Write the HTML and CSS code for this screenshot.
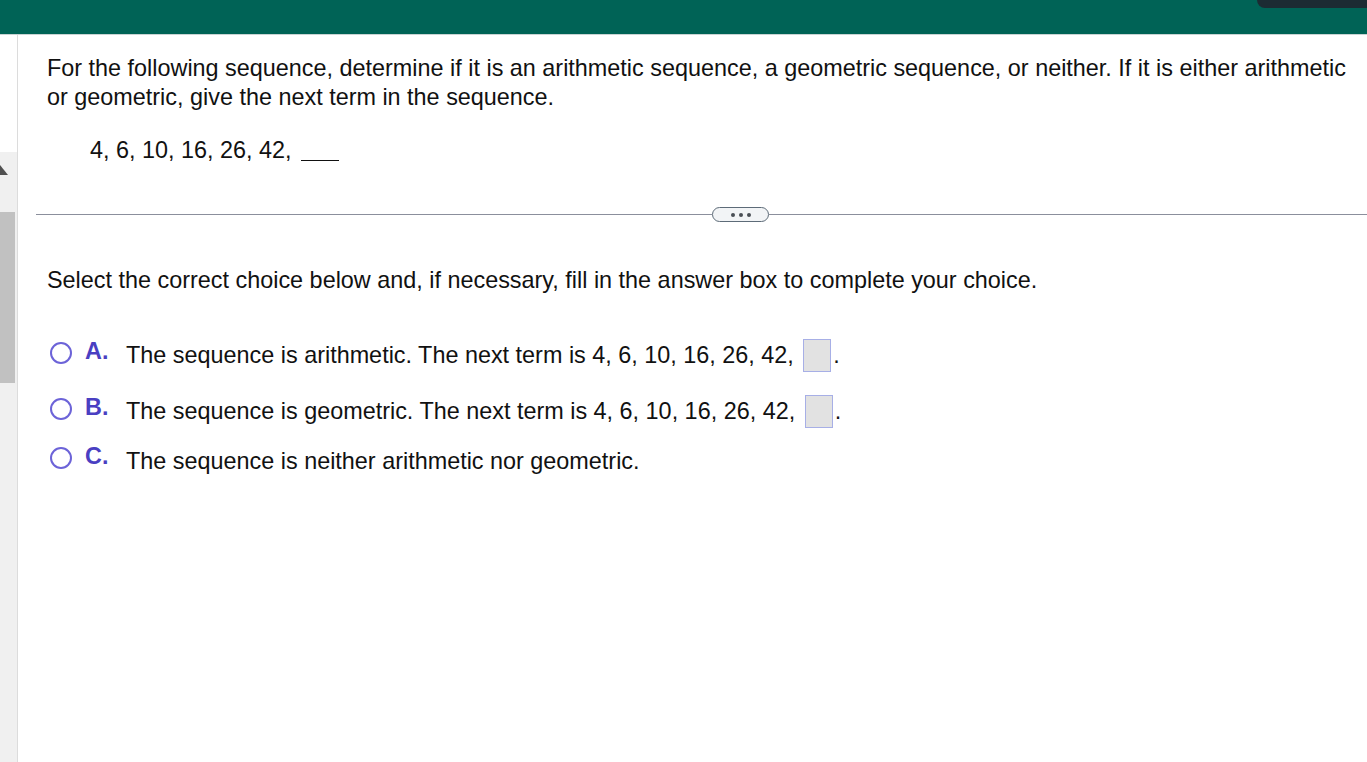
FILE: index.html
```html
<!DOCTYPE html>
<html lang="en">
<head>
  <meta charset="UTF-8" />
  <title>Sequence question</title>
  <link rel="stylesheet" href="styles.css">
</head>
<body>
  <div class="topbar">
    <div class="corner"></div>
  </div>

  <div class="page">
    <div class="sidebar">
      <div class="side-top"></div>
      <div class="track">
        <svg class="arrow" width="9" height="12" viewBox="0 0 9 12">
          <polygon points="0,1 8,11 0,11" fill="#505050"/>
        </svg>
        <div class="thumb"></div>
      </div>
    </div>

    <div class="content">
      <p class="question">For the following sequence, determine if it is an arithmetic sequence, a geometric sequence, or neither. If it is either arithmetic or geometric, give the next term in the sequence.</p>
      <p class="sequence">4, 6, 10, 16, 26, 42, <span class="blank"></span></p>

      <div class="divider">
        <div class="line left"></div>
        <div class="pill"><span></span><span></span><span></span></div>
        <div class="line"></div>
      </div>

      <p class="instruction">Select the correct choice below and, if necessary, fill in the answer box to complete your choice.</p>

      <div class="options">
        <div class="option first">
          <span class="radio"></span>
          <span class="letter">A.</span>
          <span class="text">The sequence is arithmetic. The next term is 4, 6, 10, 16, 26, 42, <span class="answer"></span>.</span>
        </div>
        <div class="option">
          <span class="radio"></span>
          <span class="letter">B.</span>
          <span class="text">The sequence is geometric. The next term is 4, 6, 10, 16, 26, 42, <span class="answer"></span>.</span>
        </div>
        <div class="option last">
          <span class="radio"></span>
          <span class="letter">C.</span>
          <span class="text">The sequence is neither arithmetic nor geometric.</span>
        </div>
      </div>
    </div>
  </div>
</body>
</html>
```

FILE: styles.css
```css
body {
  margin: 0;
  font-family: "Liberation Sans", Arial, sans-serif;
  color: #111;
  background: white;
  overflow: hidden;
}

.topbar {
  position: relative;
  height: 34px;
  background: #006356;
  border-bottom: 1px solid #c9d3d3;
}

.corner {
  position: absolute;
  top: 0;
  right: 0;
  width: 110px;
  height: 8px;
  background: #1c2b33;
  border-bottom-left-radius: 12px;
}

.page {
  display: flex;
  height: 727px;
}

.sidebar {
  width: 17px;
  display: flex;
  flex-direction: column;
  border-right: 1px solid #dcdcdc;
}

.side-top {
  height: 117px;
  background: white;
}

.track {
  flex: 1;
  background: #f0f0f0;
  position: relative;
}

.arrow {
  position: absolute;
  left: 0;
  top: 12px;
}

.thumb {
  position: absolute;
  left: 0;
  top: 60px;
  width: 15px;
  height: 171px;
  background: #c1c1c1;
}

.content {
  flex: 1;
  padding: 19px 0 0 29px;
  font-size: 23.4px;
  line-height: 29px;
}

p {
  margin: 0;
}

.question {
  padding-right: 14px;
}

.sequence {
  margin-top: 23px;
  padding-left: 43px;
}

.blank {
  display: inline-block;
  width: 38px;
  height: 25px;
  border-bottom: 1px solid #111;
  vertical-align: -3px;
  margin-left: 3px;
}

.divider {
  display: flex;
  align-items: center;
  margin: 42px 0 0 -11px;
  height: 15px;
}

.line {
  flex: 1;
  height: 1px;
  background: #8b8f9c;
}

.line.left {
  flex: none;
  width: 676px;
}

.pill {
  width: 55px;
  height: 13px;
  border: 1px solid #5d6b78;
  border-radius: 8px;
  background: #f2f4f6;
  display: flex;
  align-items: center;
  justify-content: center;
  gap: 4px;
}

.pill span {
  width: 4px;
  height: 4px;
  border-radius: 50%;
  background: #4a4f55;
}

.instruction {
  margin-top: 44px;
}

.options {
  margin-top: 45px;
}

.option {
  display: flex;
  align-items: center;
  min-height: 33px;
  margin-bottom: 23px;
}

.option.last {
  margin-top: -7px;
}

.radio {
  width: 18px;
  height: 18px;
  border: 2px solid #6c63d8;
  border-radius: 50%;
  margin: 0 13px 0 3px;
  position: relative;
  top: -4px;
  flex: none;
}

.letter {
  width: 41px;
  font-weight: bold;
  color: #4a3fc2;
  position: relative;
  top: -5px;
  flex: none;
}

.answer {
  display: inline-block;
  width: 26px;
  height: 31px;
  border: 1px solid #a7afe6;
  background: #e2e2e2;
  vertical-align: middle;
  margin: -4px 2px 0 3px;
}
```
